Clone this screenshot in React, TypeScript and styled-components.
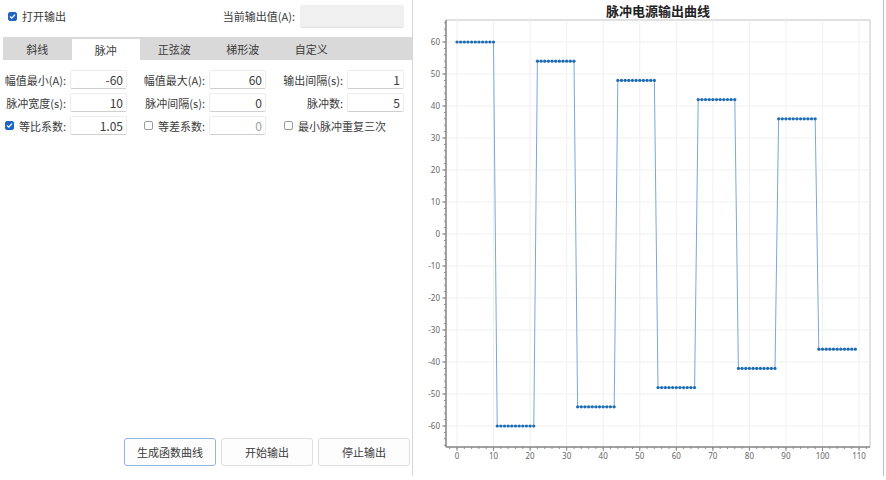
import React from "react";
import styled, { createGlobalStyle } from "styled-components";

const GlobalStyle = createGlobalStyle`
  html, body {
    margin: 0;
    padding: 0;
    background: #ffffff;
  }
  body {
    font-family: "Noto Sans CJK SC", "Noto Sans", "Liberation Sans", sans-serif;
    font-size: 11px;
    color: #3a3a3a;
  }
`;

const Window = styled.div`
  display: flex;
  width: 886px;
  height: 480px;
  overflow: hidden;
`;

const LeftPanel = styled.div`
  display: flex;
  flex-direction: column;
  width: 412px;
  height: 476px;
  border-right: 1px solid #d6d6d6;
`;

const TopBar = styled.div`
  display: flex;
  align-items: center;
  justify-content: space-between;
  height: 32px;
  padding: 0 8px 0 8px;
`;

const CheckLabel = styled.label`
  display: flex;
  align-items: center;
  gap: 5px;
  white-space: nowrap;
`;

const Box = styled.span<{ $checked?: boolean }>`
  display: inline-flex;
  align-items: center;
  justify-content: center;
  width: 9px;
  height: 9px;
  border-radius: 2px;
  box-sizing: border-box;
  background: ${(p) => (p.$checked ? "#1f66c2" : "#fff")};
  border: 1px solid ${(p) => (p.$checked ? "#1f66c2" : "#9a9a9a")};
`;

const Check = ({ checked }: { checked?: boolean }) => (
  <Box $checked={checked}>
    {checked && (
      <svg width="7" height="7" viewBox="0 0 7 7">
        <path d="M1 3.6 L2.8 5.2 L6 1.6" stroke="#fff" strokeWidth="1.3" fill="none" />
      </svg>
    )}
  </Box>
);

const CurrentValue = styled.div`
  display: flex;
  align-items: center;
  gap: 5px;
`;

const ReadOnlyBox = styled.div`
  width: 104px;
  height: 22px;
  background: #f0f0f0;
  border-bottom: 1px solid #e2e2e2;
  border-radius: 2px;
`;

const TabBar = styled.div`
  display: flex;
  align-items: flex-end;
  height: 23px;
  margin: 5px 0 0 3px;
  background: #d9d9d9;
`;

const Tab = styled.div<{ $active?: boolean }>`
  display: flex;
  align-items: center;
  justify-content: center;
  width: 68.5px;
  height: ${(p) => (p.$active ? "21px" : "23px")};
  background: ${(p) => (p.$active ? "#ffffff" : "transparent")};
`;

const Form = styled.div`
  display: grid;
  grid-template-columns: 66px 57px 74px 57px 73px 57px;
  column-gap: 4px;
  row-gap: 4px;
  grid-auto-rows: 19px;
  margin-top: 10px;
`;

const Label = styled.div`
  display: flex;
  align-items: center;
  justify-content: flex-end;
  white-space: nowrap;
`;

const CheckCell = styled.div`
  display: flex;
  align-items: center;
  justify-content: flex-end;
  gap: 5px;
  white-space: nowrap;
`;

const Field = styled.div<{ $disabled?: boolean }>`
  display: flex;
  align-items: center;
  justify-content: flex-end;
  padding-right: 3px;
  font-size: 12px;
  background: #fff;
  border: 1px solid #ececec;
  border-bottom-color: #cfcfcf;
  border-radius: 2px;
  color: ${(p) => (p.$disabled ? "#a0a0a0" : "#3a3a3a")};
`;

const WideCheck = styled.div`
  grid-column: span 2;
  display: flex;
  align-items: center;
  gap: 5px;
  padding-left: 14px;
  white-space: nowrap;
`;

const Spacer = styled.div`
  flex: 1;
`;

const ButtonRow = styled.div`
  display: flex;
  justify-content: flex-end;
  gap: 5px;
  padding-right: 2px;
  margin-bottom: 10px;
`;

const Button = styled.button<{ $primary?: boolean }>`
  width: 92px;
  height: 28px;
  background: #fdfdfd;
  border: 1px solid ${(p) => (p.$primary ? "#8fb6e6" : "#dedede")};
  border-radius: 3px;
  font-family: inherit;
  font-size: 11px;
  color: #3a3a3a;
  padding: 0;
`;

const ChartPanel = styled.div`
  width: 470px;
  height: 476px;
  border-right: 1px solid #a9c3e6;
`;

/* ---------- chart ---------- */

const X0 = 44;
const XS = 3.655;
const Y0 = 234;
const YS = 3.2;
const px = (v: number) => X0 + v * XS;
const py = (v: number) => Y0 - v * YS;

const levels = [60, -60, 54, -54, 48, -48, 42, -42, 36, -36];
const points: [number, number][] = [];
levels.forEach((lv, i) => {
  for (let k = 0; k <= 10; k++) points.push([i * 11 + k, lv]);
});

const PulseChart = () => {
  const L = 33, R = 457, T = 20, B = 447;
  const yMajor: number[] = [];
  for (let v = -60; v <= 60; v += 10) yMajor.push(v);
  const yMinor: number[] = [];
  for (let v = -66; v <= 66; v += 2) yMinor.push(v);
  const xMajor: number[] = [];
  for (let v = 0; v <= 110; v += 10) xMajor.push(v);
  const xMinor: number[] = [];
  for (let v = -2; v <= 112; v += 2) xMinor.push(v);
  const line = points.map(([x, y]) => `${px(x).toFixed(1)},${py(y).toFixed(1)}`).join(" ");

  return (
    <svg width="470" height="476" viewBox="0 0 470 476">
      <text
        x={(L + R) / 2}
        y={16}
        textAnchor="middle"
        fontSize="13"
        fontWeight="bold"
        fill="#222"
        fontFamily='"Noto Sans CJK SC", sans-serif'
      >
        脉冲电源输出曲线
      </text>
      <rect x={L} y={T} width={R - L} height={B - T} fill="#fff" stroke="#c4c4c4" strokeWidth="1" />
      {yMajor.map((v) => (
        <line key={"gy" + v} x1={L} x2={R} y1={py(v)} y2={py(v)} stroke="#f0f0f0" />
      ))}
      {xMajor.map((v) => (
        <line key={"gx" + v} x1={px(v)} x2={px(v)} y1={T} y2={B} stroke="#f0f0f0" />
      ))}
      <line x1={L} x2={L} y1={T} y2={B} stroke="#8c8c8c" strokeWidth="1.5" />
      <line x1={L} x2={R} y1={B} y2={B} stroke="#8c8c8c" strokeWidth="1.5" />
      {yMinor.map((v) => (
        <line key={"my" + v} x1={L - 2} x2={L} y1={py(v)} y2={py(v)} stroke="#8c8c8c" />
      ))}
      {yMajor.map((v) => (
        <g key={"ty" + v}>
          <line x1={L - 4} x2={L} y1={py(v)} y2={py(v)} stroke="#8c8c8c" />
          <text x={L - 6} y={py(v) + 3} textAnchor="end" fontSize="8" fill="#666" fontFamily='"Noto Sans", sans-serif'>
            {v}
          </text>
        </g>
      ))}
      {xMinor.map((v) => (
        <line key={"mx" + v} x1={px(v)} x2={px(v)} y1={B} y2={B + 2} stroke="#8c8c8c" />
      ))}
      {xMajor.map((v) => (
        <g key={"tx" + v}>
          <line x1={px(v)} x2={px(v)} y1={B} y2={B + 4} stroke="#8c8c8c" />
          <text x={px(v)} y={B + 12} textAnchor="middle" fontSize="8" fill="#666" fontFamily='"Noto Sans", sans-serif'>
            {v}
          </text>
        </g>
      ))}
      <polyline points={line} fill="none" stroke="#79a9d8" strokeWidth="1" />
      {points.map(([x, y], i) => (
        <circle key={i} cx={px(x)} cy={py(y)} r="1.6" fill="#1e6db3" />
      ))}
    </svg>
  );
};

export default function App() {
  return (
    <>
      <GlobalStyle />
      <Window>
        <LeftPanel>
          <TopBar>
            <CheckLabel>
              <Check checked />
              打开输出
            </CheckLabel>
            <CurrentValue>
              当前输出值(A):
              <ReadOnlyBox />
            </CurrentValue>
          </TopBar>
          <TabBar>
            <Tab>斜线</Tab>
            <Tab $active>脉冲</Tab>
            <Tab>正弦波</Tab>
            <Tab>梯形波</Tab>
            <Tab>自定义</Tab>
          </TabBar>
          <Form>
            <Label>幅值最小(A):</Label>
            <Field>-60</Field>
            <Label>幅值最大(A):</Label>
            <Field>60</Field>
            <Label>输出间隔(s):</Label>
            <Field>1</Field>

            <Label>脉冲宽度(s):</Label>
            <Field>10</Field>
            <Label>脉冲间隔(s):</Label>
            <Field>0</Field>
            <Label>脉冲数:</Label>
            <Field>5</Field>

            <CheckCell>
              <Check checked />
              等比系数:
            </CheckCell>
            <Field>1.05</Field>
            <CheckCell>
              <Check />
              等差系数:
            </CheckCell>
            <Field $disabled>0</Field>
            <WideCheck>
              <Check />
              最小脉冲重复三次
            </WideCheck>
          </Form>
          <Spacer />
          <ButtonRow>
            <Button $primary>生成函数曲线</Button>
            <Button>开始输出</Button>
            <Button>停止输出</Button>
          </ButtonRow>
        </LeftPanel>
        <ChartPanel>
          <PulseChart />
        </ChartPanel>
      </Window>
    </>
  );
}
